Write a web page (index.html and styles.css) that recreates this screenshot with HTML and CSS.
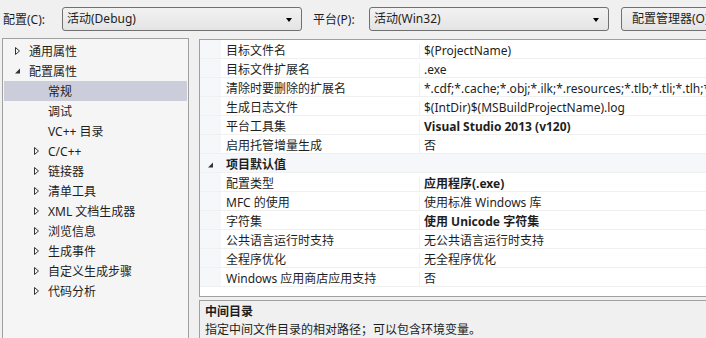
FILE: index.html
```html
<!DOCTYPE html>
<html lang="zh-CN">

<head>
    <meta charset="UTF-8">
    <title>属性页</title>
    <link rel="stylesheet" href="styles.css">
</head>

<body>
    <div class="toolbar">
        <span class="label">配置(C):</span>
        <div class="combo combo-config">活动(Debug)<span class="arrow"></span></div>
        <span class="label label-platform">平台(P):</span>
        <div class="combo combo-platform">活动(Win32)<span class="arrow"></span></div>
        <div class="button">配置管理器(O)</div>
    </div>

    <div class="main">
        <ul class="tree">
            <li class="node"><svg class="tw" viewBox="0 0 8 8"><path d="M1.5 0.5 L5.5 4 L1.5 7.5 Z" fill="none" stroke="#333" /></svg>通用属性</li>
            <li class="node"><svg class="tw" viewBox="0 0 8 8"><path d="M6 1.5 L6 6.5 L1 6.5 Z" fill="#333" /></svg>配置属性</li>
            <li class="node child selected">常规</li>
            <li class="node child">调试</li>
            <li class="node child">VC++ 目录</li>
            <li class="node sub"><svg class="tw" viewBox="0 0 8 8"><path d="M1.5 0.5 L5.5 4 L1.5 7.5 Z" fill="none" stroke="#333" /></svg>C/C++</li>
            <li class="node sub"><svg class="tw" viewBox="0 0 8 8"><path d="M1.5 0.5 L5.5 4 L1.5 7.5 Z" fill="none" stroke="#333" /></svg>链接器</li>
            <li class="node sub"><svg class="tw" viewBox="0 0 8 8"><path d="M1.5 0.5 L5.5 4 L1.5 7.5 Z" fill="none" stroke="#333" /></svg>清单工具</li>
            <li class="node sub"><svg class="tw" viewBox="0 0 8 8"><path d="M1.5 0.5 L5.5 4 L1.5 7.5 Z" fill="none" stroke="#333" /></svg>XML 文档生成器</li>
            <li class="node sub"><svg class="tw" viewBox="0 0 8 8"><path d="M1.5 0.5 L5.5 4 L1.5 7.5 Z" fill="none" stroke="#333" /></svg>浏览信息</li>
            <li class="node sub"><svg class="tw" viewBox="0 0 8 8"><path d="M1.5 0.5 L5.5 4 L1.5 7.5 Z" fill="none" stroke="#333" /></svg>生成事件</li>
            <li class="node sub"><svg class="tw" viewBox="0 0 8 8"><path d="M1.5 0.5 L5.5 4 L1.5 7.5 Z" fill="none" stroke="#333" /></svg>自定义生成步骤</li>
            <li class="node sub"><svg class="tw" viewBox="0 0 8 8"><path d="M1.5 0.5 L5.5 4 L1.5 7.5 Z" fill="none" stroke="#333" /></svg>代码分析</li>
        </ul>

        <div class="right">
            <div class="grid">
                <div class="row"><span class="name">目标文件名</span><span class="value">$(ProjectName)</span></div>
                <div class="row"><span class="name">目标文件扩展名</span><span class="value">.exe</span></div>
                <div class="row"><span class="name">清除时要删除的扩展名</span><span class="value">*.cdf;*.cache;*.obj;*.ilk;*.resources;*.tlb;*.tli;*.tlh;*.tmp</span></div>
                <div class="row"><span class="name">生成日志文件</span><span class="value">$(IntDir)$(MSBuildProjectName).log</span></div>
                <div class="row"><span class="name">平台工具集</span><span class="value bold">Visual Studio 2013 (v120)</span></div>
                <div class="row"><span class="name">启用托管增量生成</span><span class="value">否</span></div>
                <div class="row category"><svg class="tw-cat" viewBox="0 0 8 8"><path d="M6 1.5 L6 6.5 L1 6.5 Z" fill="#333" /></svg><span class="cat-name">项目默认值</span></div>
                <div class="row"><span class="name">配置类型</span><span class="value bold">应用程序(.exe)</span></div>
                <div class="row"><span class="name">MFC 的使用</span><span class="value">使用标准 Windows 库</span></div>
                <div class="row"><span class="name">字符集</span><span class="value bold">使用 Unicode 字符集</span></div>
                <div class="row"><span class="name">公共语言运行时支持</span><span class="value">无公共语言运行时支持</span></div>
                <div class="row"><span class="name">全程序优化</span><span class="value">无全程序优化</span></div>
                <div class="row"><span class="name">Windows 应用商店应用支持</span><span class="value">否</span></div>
            </div>
            <div class="desc">
                <p class="desc-title">中间目录</p>
                <p class="desc-text">指定中间文件目录的相对路径；可以包含环境变量。</p>
            </div>
        </div>
    </div>
</body>

</html>
```

FILE: styles.css
```css
body {
    margin: 0;
    width: 706px;
    height: 338px;
    overflow: hidden;
    background-color: #f0f0f0;
    font-family: "Noto Sans", "Noto Sans CJK SC", sans-serif;
    font-size: 12px;
    color: #1e1e1e;
}

.toolbar {
    display: flex;
    align-items: center;
    height: 38px;
    padding-left: 3px;
    white-space: nowrap;
    overflow: hidden;
}

.label {
    flex-shrink: 0;
    width: 59px;
}

.label-platform {
    width: 56px;
    margin-left: 11px;
}

.combo {
    position: relative;
    flex-shrink: 0;
    box-sizing: border-box;
    height: 24px;
    line-height: 22px;
    padding-left: 4px;
    border: 1px solid #707070;
    border-radius: 3px;
    background: linear-gradient(#f2f2f2, #e4e4e4);
}

.combo-config {
    width: 240px;
}

.combo-platform {
    width: 240px;
}

.arrow {
    position: absolute;
    right: 9px;
    top: 10px;
    border-left: 3px solid transparent;
    border-right: 3px solid transparent;
    border-top: 4px solid #000;
}

.button {
    flex-shrink: 0;
    box-sizing: border-box;
    height: 24px;
    line-height: 22px;
    margin-left: 12px;
    padding: 0 10px;
    border: 1px solid #707070;
    border-radius: 3px;
    background: linear-gradient(#f2f2f2, #e4e4e4);
}

.main {
    display: flex;
    align-items: flex-start;
    padding-left: 2px;
}

.tree {
    list-style: none;
    flex-shrink: 0;
    box-sizing: border-box;
    width: 187px;
    height: 310px;
    margin: 0;
    padding: 2px 1px 0 1px;
    border: 1px solid #a0a0a0;
    background-color: #f5f5f5;
    white-space: nowrap;
}

.node {
    display: flex;
    align-items: center;
    height: 20px;
    padding-left: 10px;
    color: #1e1e1e;
}

.node.sub {
    padding-left: 29px;
}

.node.child {
    padding-left: 44px;
}

.node.selected {
    background-color: #cbcdda;
}

.tw {
    flex-shrink: 0;
    width: 8px;
    height: 8px;
    margin-right: 7px;
}

.right {
    flex: 1;
    min-width: 0;
    margin-left: 10px;
}

.grid {
    box-sizing: border-box;
    height: 258px;
    margin-top: 1px;
    border: 1px solid #a0a0a0;
    border-right: none;
    background-color: #fff;
    overflow: hidden;
}

.row {
    display: flex;
    box-sizing: border-box;
    height: 19px;
    padding-top: 4px;
    line-height: 14px;
    border-bottom: 1px solid #f0f0f0;
    white-space: nowrap;
    overflow: hidden;
    background: linear-gradient(to right, #f5f7fb 0, #f5f7fb 21px, #fff 21px);
}

.name {
    box-sizing: border-box;
    width: 220px;
    flex-shrink: 0;
    padding-left: 26px;
    border-right: 1px solid #f0f0f0;
}

.value {
    padding-left: 4px;
}

.bold {
    font-weight: bold;
}

.row.category {
    align-items: center;
    padding-top: 4px;
    background: #f5f7fb;
    font-weight: bold;
}

.tw-cat {
    width: 8px;
    height: 8px;
    margin-left: 7px;
    margin-right: 11px;
}

.desc {
    box-sizing: border-box;
    height: 50px;
    margin-top: 3px;
    padding: 2px 0 0 5px;
    border: 1px solid #a0a0a0;
    border-right: none;
    border-bottom: none;
}

.desc p {
    margin: 0;
    line-height: 18px;
}

.desc-title {
    font-weight: bold;
}
```
